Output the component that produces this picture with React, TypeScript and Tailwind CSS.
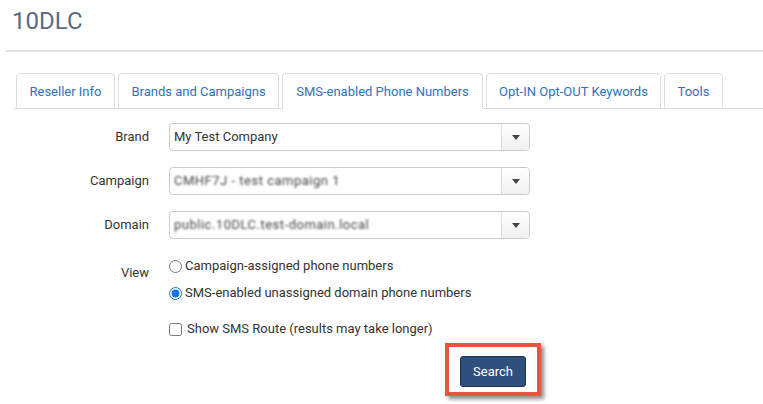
import { useState } from 'react';

const tabs = [
    { label: 'Reseller Info', w: 'w-[99px]' },
    { label: 'Brands and Campaigns', w: 'w-[161px]' },
    { label: 'SMS-enabled Phone Numbers', w: 'w-[201px]' },
    { label: 'Opt-IN Opt-OUT Keywords', w: 'w-[175px]' },
    { label: 'Tools', w: 'w-[59px]' },
];

function SelectBox({ value, blurred }: { value: string; blurred?: boolean }) {
    return (
        <div className="flex h-[28px] w-[361px] items-stretch rounded-[4px] border border-[#cccccc] bg-white">
            <div className="flex flex-1 items-center pl-[4px] text-[13px] text-[#333333]">
                <span className={blurred ? 'blur-[1px] text-[#444444] tracking-[0.5px]' : ''}>{value}</span>
            </div>
            <div className="flex w-[28px] items-center justify-center rounded-r-[4px] border-l border-[#dddddd] bg-gradient-to-b from-[#ffffff] to-[#f0f0f0]">
                <svg width="8" height="5" viewBox="0 0 8 5">
                    <path d="M0 0h8L4 5z" fill="#444444" />
                </svg>
            </div>
        </div>
    );
}

export default function App() {
    const [active] = useState(2);
    const [view, setView] = useState('unassigned');
    const [route, setRoute] = useState(false);

    return (
        <div className="h-[404px] w-[763px] overflow-hidden bg-white font-['Roboto',sans-serif]">
            {/* Header */}
            <div className="pl-[12px] pt-[6px]">
                <h1 className="text-[24px] leading-[30px] text-[#5b6a80]">10DLC</h1>
            </div>
            <div className="ml-[6px] mt-[14px] h-[2px] bg-[#e2e2e2]" />

            {/* Tabs */}
            <div className="ml-[14px] mt-[21px] flex items-end gap-[3px] border-b border-[#dddddd] pl-[2px]">
                {tabs.map((t, i) => (
                    <div
                        key={t.label}
                        className={`${t.w} -mb-px flex h-[36px] items-center justify-center rounded-t-[4px] border border-[#dddddd] pt-[1px] text-[13px] text-[#2f72bf] ${
                            i === active ? 'border-b-white bg-white' : ''
                        }`}
                    >
                        {t.label}
                    </div>
                ))}
            </div>

            {/* Form */}
            <div className="mt-[14px] flex flex-col gap-[16px]">
                <div className="flex items-center">
                    <label className="w-[149px] text-right text-[13px] text-[#333333]">Brand</label>
                    <div className="ml-[20px]">
                        <SelectBox value="My Test Company" />
                    </div>
                </div>
                <div className="flex items-center">
                    <label className="w-[149px] text-right text-[13px] text-[#333333]">Campaign</label>
                    <div className="ml-[20px]">
                        <SelectBox value="CMHF7J - test campaign 1" blurred />
                    </div>
                </div>
                <div className="flex items-center">
                    <label className="w-[149px] text-right text-[13px] text-[#333333]">Domain</label>
                    <div className="ml-[20px]">
                        <SelectBox value="public.10DLC.test-domain.local" blurred />
                    </div>
                </div>
            </div>

            <div className="mt-[14px] flex">
                <label className="w-[149px] pt-[10px] text-right text-[13px] text-[#333333]">View</label>
                <div className="ml-[20px] flex flex-col pt-[4px]">
                    <label className="flex h-[18px] items-center text-[13px] text-[#333333]">
                        <input
                            type="radio"
                            name="view"
                            checked={view === 'assigned'}
                            onChange={() => setView('assigned')}
                            className="m-0 mr-[3px] h-[13px] w-[13px] accent-[#1a73e8]"
                        />
                        Campaign-assigned phone numbers
                    </label>
                    <label className="mt-[9px] flex h-[18px] items-center text-[13px] text-[#333333]">
                        <input
                            type="radio"
                            name="view"
                            checked={view === 'unassigned'}
                            onChange={() => setView('unassigned')}
                            className="m-0 mr-[3px] h-[13px] w-[13px] accent-[#1a73e8]"
                        />
                        SMS-enabled unassigned domain phone numbers
                    </label>
                    <label className="mt-[18px] flex h-[18px] items-center text-[13px] text-[#333333]">
                        <input
                            type="checkbox"
                            checked={route}
                            onChange={() => setRoute(!route)}
                            className="m-0 mr-[5px] h-[13px] w-[13px]"
                        />
                        Show SMS Route (results may take longer)
                    </label>
                </div>
            </div>

            {/* Search highlighted */}
            <div className="ml-[445px] mt-[5px] inline-block border-4 border-[#e5583f] px-[11px] pb-[5px] pt-[9px] shadow-[3px_3px_4px_rgba(0,0,0,0.45)]">
                <button className="h-[31px] w-[66px] rounded-[3px] border border-[#1e3354] bg-[#2f4f7d] text-[13px] text-white">
                    Search
                </button>
            </div>
        </div>
    );
}
